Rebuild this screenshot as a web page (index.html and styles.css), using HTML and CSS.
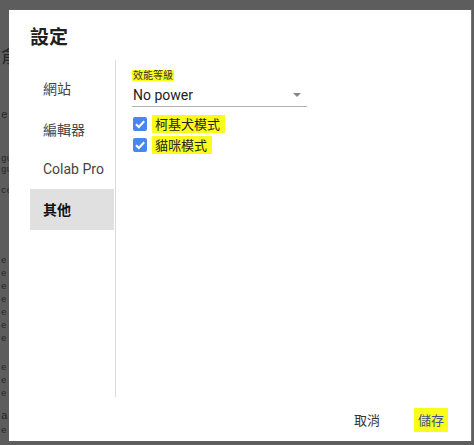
FILE: index.html
```html
<!DOCTYPE html>
<html>
<head>
<meta charset="utf-8">
<link rel="stylesheet" href="styles.css">
</head>
<body>
<div class="page">
  <div class="page-head">俞</div>
  <div class="page-line first">e</div>
  <div class="page-code">
    <div>gu</div>
    <div>gu</div>
    <div class="gap">ce</div>
  </div>
  <div class="page-code lower">
    <div>e</div><div>e</div><div>e</div><div>e</div><div>e</div><div>e</div><div>e</div>
    <div class="gap2">e</div><div>e</div><div>e</div>
    <div class="big">a</div><div>e</div>
  </div>
</div>

<div class="dialog">
  <h1 class="title">設定</h1>
  <div class="body">
    <nav class="nav">
      <div class="nav-item">網站</div>
      <div class="nav-item">編輯器</div>
      <div class="nav-item">Colab Pro</div>
      <div class="nav-item active">其他</div>
    </nav>
    <div class="content">
      <div class="field-label"><span class="hl">效能等級</span></div>
      <div class="select">
        <span class="select-value">No power</span>
        <span class="arrow"></span>
      </div>
      <label class="check">
        <span class="box"><svg viewBox="0 0 14 14" width="14" height="14"><path d="M3 7.2 L5.8 10 L11.2 4.2" fill="none" stroke="#fff" stroke-width="2"/></svg></span>
        <span class="hl lbl">柯基犬模式</span>
      </label>
      <label class="check">
        <span class="box"><svg viewBox="0 0 14 14" width="14" height="14"><path d="M3 7.2 L5.8 10 L11.2 4.2" fill="none" stroke="#fff" stroke-width="2"/></svg></span>
        <span class="hl lbl">貓咪模式</span>
      </label>
    </div>
  </div>
  <div class="footer">
    <span class="btn">取消</span>
    <span class="btn save"><span class="hl">儲存</span></span>
  </div>
</div>
</body>
</html>
```

FILE: styles.css
```css
* { box-sizing: border-box; }
html, body { margin: 0; padding: 0; }
body {
  width: 474px;
  height: 445px;
  overflow: hidden;
  background: #5d5d5d;
  position: relative;
  font-family: Roboto, "Noto Sans CJK TC", sans-serif;
}

.page {
  padding-top: 42px;
  padding-left: 1px;
  color: #262626;
  font-family: "Liberation Mono", "Noto Sans CJK TC", monospace;
}
.page-head { font-size: 20px; line-height: 26px; font-family: "Noto Sans CJK TC", sans-serif; }
.page-line { font-size: 11px; line-height: 14px; margin-top: 40px; }
.page-code { font-size: 9px; line-height: 11px; margin-top: 32px; }
.page-code .gap { margin-top: 10px; }
.page-code.lower { margin-top: 58px; line-height: 13px; }
.page-code .gap2 { margin-top: 16px; }
.page-code .big { font-size: 11px; line-height: 18px; margin-top: 6px; }

.dialog {
  position: absolute;
  left: 9px;
  top: 10px;
  width: 462px;
  height: 431px;
  background: #fff;
  box-shadow: 1px 0 1px rgba(255,255,255,0.15);
  padding: 12px 24px 0 21px;
  display: flex;
  flex-direction: column;
}

.title {
  margin: 0;
  font-size: 19px;
  line-height: 28px;
  font-weight: 700;
  color: #202020;
  font-family: "Noto Sans CJK TC", sans-serif;
}

.body {
  margin-top: 10px;
  height: 337px;
  display: flex;
}

.nav {
  width: 86px;
  padding-top: 8px;
  padding-right: 1px;
  border-right: 1px solid #dadada;
}
.nav-item {
  height: 40.4px;
  display: flex;
  align-items: center;
  padding-left: 13px;
  font-size: 14px;
  color: #444;
}
.nav-item.active {
  background: #e0e0e0;
  color: #111;
  font-weight: 700;
}

.content {
  padding-left: 16px;
  padding-top: 8px;
  width: 191px;
}

.hl { background: #fcfc1c; }

.field-label {
  font-size: 10px;
  line-height: 15px;
  color: #333;
}
.field-label .hl { padding: 0 1px; }

.select {
  height: 24px;
  border-bottom: 1.5px solid #b0b0b0;
  display: flex;
  align-items: center;
  justify-content: space-between;
  padding-left: 1px;
  padding-right: 6px;
  padding-top: 1px;
}
.select-value { font-size: 14px; color: #222; }
.arrow {
  width: 0; height: 0;
  border-left: 4px solid transparent;
  border-right: 4px solid transparent;
  border-top: 4px solid #888;
}

.check {
  display: flex;
  align-items: center;
  height: 21px;
  margin-left: 1px;
}
.check:first-of-type { margin-top: 6px; }
.box {
  width: 14px; height: 14px;
  background: #4a86f0;
  border-radius: 2px;
  display: flex;
}
.lbl {
  margin-left: 5px;
  font-size: 13px;
  line-height: 18px;
  padding: 0 5px 0 3px;
  color: #222;
  font-family: "Noto Sans CJK TC", sans-serif;
}

.footer {
  display: flex;
  justify-content: flex-end;
  align-items: center;
  height: 44px;
  padding-top: 1px;
}
.btn {
  font-size: 13px;
  color: #333;
  font-family: "Noto Sans CJK TC", sans-serif;
}
.btn.save { margin-left: 34px; margin-right: -1px; color: #1a73e8; }
.btn.save .hl { padding: 2px 4px 3px; color: #3a5590; }
```
